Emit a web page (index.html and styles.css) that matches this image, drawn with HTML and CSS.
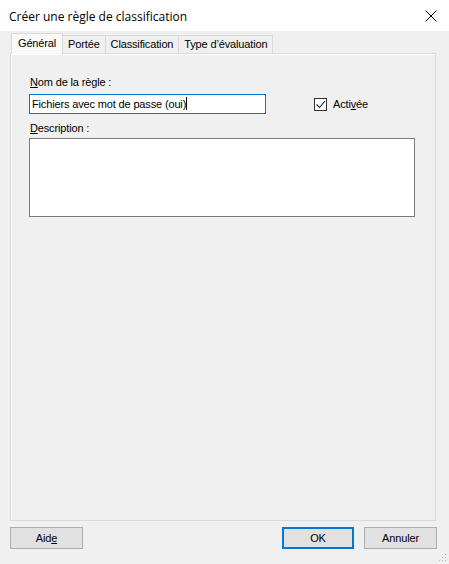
FILE: index.html
```html
<!DOCTYPE html>
<html lang="fr">
<head>
    <meta charset="UTF-8">
    <title>Créer une règle de classification</title>
    <link rel="stylesheet" href="styles.css">
</head>
<body>
    <div class="window">
        <div class="titlebar">
            <span class="title">Créer une règle de classification</span>
            <svg class="close" width="12" height="12" viewBox="0 0 12 12">
                <path d="M0.5 0.5 L11.5 11.5 M11.5 0.5 L0.5 11.5" stroke="#000" stroke-width="1" fill="none"/>
            </svg>
        </div>
        <div class="dialog">
            <div class="tabs">
                <div class="tab selected">Général</div>
                <div class="tab">Portée</div>
                <div class="tab">Classification</div>
                <div class="tab">Type d’évaluation</div>
            </div>
            <div class="panel">
                <div class="row-label"><span class="ul">N</span>om de la règle :</div>
                <div class="name-row">
                    <div class="textbox focused">Fichiers avec mot de passe (oui)<span class="caret"></span></div>
                    <label class="check">
                        <span class="box">
                            <svg width="11" height="11" viewBox="0 0 11 11">
                                <path d="M1.5 5.5 L4.5 8.5 L10 2" stroke="#222" stroke-width="1.1" fill="none"/>
                            </svg>
                        </span>
                        <span>Acti<span class="ul">v</span>ée</span>
                    </label>
                </div>
                <div class="row-label"><span class="ul">D</span>escription :</div>
                <div class="textarea"></div>
            </div>
            <div class="buttons">
                <button class="btn">Aid<span class="ul">e</span></button>
                <div class="spacer"></div>
                <button class="btn default">OK</button>
                <button class="btn">Annuler</button>
            </div>
        </div>
        <div class="grip">
            <svg width="8" height="8" viewBox="0 0 8 8" fill="#b4b4b4">
                <rect x="6" y="0" width="1" height="1"/>
                <rect x="3" y="3" width="1" height="1"/>
                <rect x="6" y="3" width="1" height="1"/>
                <rect x="0" y="6" width="1" height="1"/>
                <rect x="3" y="6" width="1" height="1"/>
                <rect x="6" y="6" width="1" height="1"/>
            </svg>
        </div>
    </div>
</body>
</html>
```

FILE: styles.css
```css
html, body {
    margin: 0;
    padding: 0;
}
body {
    font-family: 'Liberation Sans', Arial, sans-serif;
    font-size: 11px;
    letter-spacing: -0.15px;
    color: #000000;
    background-color: #f0f0f0;
}
.window {
    position: relative;
    width: 449px;
    height: 564px;
    display: flex;
    flex-direction: column;
    background-color: #f0f0f0;
}
.titlebar {
    height: 31px;
    background-color: #ffffff;
    display: flex;
    align-items: center;
    justify-content: space-between;
    padding: 0 12px 0 9px;
    box-sizing: border-box;
}
.title {
    font-family: 'Open Sans', 'Noto Sans', sans-serif;
    font-size: 12px;
    letter-spacing: 0;
    margin-top: 1px;
}
.dialog {
    flex: 1;
    display: flex;
    flex-direction: column;
    padding: 2px 12px 16px 10px;
}
.tabs {
    display: flex;
    align-items: flex-end;
    height: 20px;
    padding-left: 1px;
    position: relative;
    z-index: 1;
}
.tab {
    height: 18px;
    line-height: 17px;
    padding: 0 5px;
    border: 1px solid #d9d9d9;
    border-bottom: none;
    border-left: none;
    box-sizing: border-box;
    background-color: #f0f0f0;
    white-space: nowrap;
}
.tab.selected {
    height: 21px;
    margin-bottom: -1px;
    line-height: 19px;
    border-left: 1px solid #d9d9d9;
    background-color: #f9f9f9;
    padding: 0 6px;
}
.panel {
    flex: 1;
    border: 1px solid #d9d9d9;
    box-shadow: inset 1px 1px 0 #ffffff;
    background-color: #f0f0f0;
    padding: 22px 0 0 18px;
    margin-right: 1px;
}
.row-label {
    line-height: 13px;
    padding-left: 1px;
}
.ul {
    text-decoration: underline;
}
.name-row {
    display: flex;
    align-items: center;
    margin-top: 5px;
    margin-bottom: 8px;
}
.textbox {
    width: 237px;
    height: 20px;
    line-height: 18px;
    box-sizing: border-box;
    border: 1px solid #7a7a7a;
    background-color: #ffffff;
    padding-left: 2px;
    white-space: nowrap;
}
.textbox.focused {
    border-color: #0078d7;
}
.caret {
    display: inline-block;
    width: 1px;
    height: 13px;
    background-color: #000000;
    vertical-align: -2px;
}
.check {
    display: flex;
    align-items: center;
    margin-left: 48px;
    gap: 6px;
}
.box {
    width: 13px;
    height: 13px;
    box-sizing: border-box;
    border: 1px solid #333333;
    background-color: #ffffff;
    display: flex;
    align-items: center;
    justify-content: center;
}
.textarea {
    width: 386px;
    height: 79px;
    margin-top: 3px;
    box-sizing: border-box;
    border: 1px solid #7a7a7a;
    background-color: #ffffff;
}
.buttons {
    display: flex;
    gap: 10px;
    margin-top: 6px;
    height: 21px;
}
.spacer {
    flex: 1;
}
.btn {
    width: 73px;
    height: 22px;
    font-family: 'Liberation Sans', Arial, sans-serif;
    font-size: 11px;
    letter-spacing: -0.15px;
    color: #000000;
    background-color: #e1e1e1;
    border: 1px solid #adadad;
    padding: 0;
}
.btn.default {
    border: 2px solid #0078d7;
    width: 72px;
}
.grip {
    position: absolute;
    right: 2px;
    bottom: 2px;
    line-height: 0;
}
```
